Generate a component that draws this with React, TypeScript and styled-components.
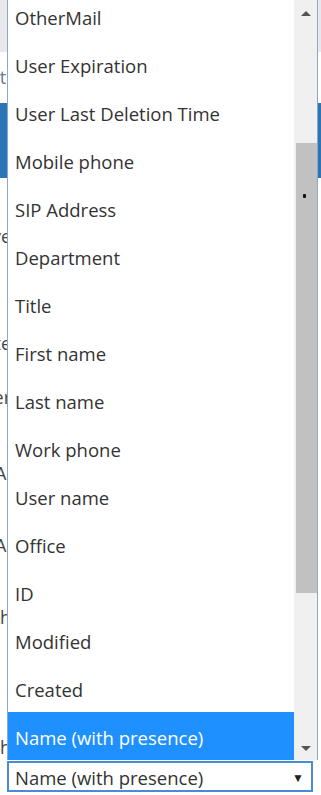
import React from "react";
import styled, { createGlobalStyle } from "styled-components";

const GlobalStyle = createGlobalStyle`
  html, body { margin: 0; padding: 0; background: #fff; overflow: hidden; }
  body { font-family: "Open Sans", "Noto Sans", "Liberation Sans", sans-serif; }
`;

const Page = styled.div`
  position: relative;
  width: 321px;
  height: 795px;
  overflow: hidden;
  background: #fff;
  display: flex;
  flex-direction: column;
`;

const TopBar = styled.div`
  height: 52px;
  flex-shrink: 0;
  background: #e8e8ec;
`;

const BlueBar = styled.div`
  height: 75px;
  margin-top: 14px;
  flex-shrink: 0;
  background: #2b74b8;
`;

const FieldRow = styled.div<{ $top: number }>`
  height: 24px;
  margin-top: ${(p) => p.$top}px;
  flex-shrink: 0;
  display: flex;
  align-items: center;
`;

const LabelTail = styled.div<{ $muted?: boolean }>`
  width: 11px;
  display: flex;
  justify-content: flex-end;
  font-size: 18px;
  color: ${(p) => (p.$muted ? "#6b7a90" : "#444")};
  white-space: nowrap;
  & > span {
    flex-shrink: 0;
  }
`;

const SelectBox = styled.div`
  margin: 2px 0 0 7px;
  width: 306px;
  height: 31px;
  box-sizing: border-box;
  border: 2px solid #4a8bd6;
  display: flex;
  align-items: center;
  justify-content: space-between;
  padding: 2px 7px 0 6px;
  font-size: 18.5px;
  color: #333;
  flex-shrink: 0;
`;

const SelectArrow = styled.span`
  font-size: 12px;
  color: #222;
`;

const Popup = styled.div`
  position: absolute;
  left: 7px;
  top: -8px;
  width: 311px;
  height: 768px;
  box-sizing: border-box;
  border-left: 1px solid #8ea8c9;
  border-right: 1px solid #8ea8c9;
  display: flex;
  background: #fff;
`;

const List = styled.div`
  flex: 1;
  display: flex;
  flex-direction: column;
`;

const Item = styled.div<{ $selected?: boolean }>`
  height: 48px;
  box-sizing: border-box;
  flex-shrink: 0;
  display: flex;
  align-items: center;
  padding: 3px 0 0 7px;
  font-size: 18.5px;
  white-space: nowrap;
  color: ${(p) => (p.$selected ? "#fff" : "#333")};
  background: ${(p) => (p.$selected ? "#1e90ff" : "#fff")};
`;

const ScrollBar = styled.div`
  width: 23px;
  background: #f0f0f0;
  display: flex;
  flex-direction: column;
`;

const ArrowButton = styled.div<{ $h: number; $auto?: boolean }>`
  height: ${(p) => p.$h}px;
  margin-top: ${(p) => (p.$auto ? "auto" : "0")};
  display: flex;
  align-items: center;
  justify-content: center;
  flex-shrink: 0;
`;

const Triangle = styled.div<{ $down?: boolean }>`
  width: 0;
  height: 0;
  border-left: 5px solid transparent;
  border-right: 5px solid transparent;
  ${(p) =>
    p.$down
      ? "border-top: 5px solid #555;"
      : "border-bottom: 5px solid #555;"}
`;

const Thumb = styled.div`
  position: relative;
  margin: 109px 0 0 2px;
  height: 450px;
  background: #c1c1c1;
  flex-shrink: 0;
`;

const Dot = styled.div`
  position: absolute;
  left: 7px;
  top: 51px;
  width: 3px;
  height: 4px;
  border-radius: 1px;
  background: #111;
`;

const items = [
  "OtherMail",
  "User Expiration",
  "User Last Deletion Time",
  "Mobile phone",
  "SIP Address",
  "Department",
  "Title",
  "First name",
  "Last name",
  "Work phone",
  "User name",
  "Office",
  "ID",
  "Modified",
  "Created",
  "Name (with presence)",
];

const fragments: { top: number; text: string }[] = [
  { top: 46, text: "Approve" },
  { top: 83, text: "Note" },
  { top: 30, text: "Order" },
  { top: 52, text: "Al" },
  { top: 48, text: "Al" },
  { top: 48, text: "Ch" },
  { top: 106, text: "h" },
];

export default function App() {
  return (
    <>
      <GlobalStyle />
      <Page>
        <TopBar />
        <FieldRow $top={13}>
          <LabelTail $muted>
            <span>Text:</span>
          </LabelTail>
        </FieldRow>
        <BlueBar />
        {fragments.map((f, i) => (
          <FieldRow key={i} $top={f.top}>
            <LabelTail>
              <span>{f.text}</span>
            </LabelTail>
          </FieldRow>
        ))}
        <SelectBox>
          <span>Name (with presence)</span>
          <SelectArrow>▼</SelectArrow>
        </SelectBox>
        <Popup>
          <List>
            {items.map((it, i) => (
              <Item key={it} $selected={i === items.length - 1}>
                {it}
              </Item>
            ))}
          </List>
          <ScrollBar>
            <ArrowButton $h={42}>
              <Triangle />
            </ArrowButton>
            <Thumb>
              <Dot />
            </Thumb>
            <ArrowButton $h={24} $auto>
              <Triangle $down />
            </ArrowButton>
          </ScrollBar>
        </Popup>
      </Page>
    </>
  );
}
